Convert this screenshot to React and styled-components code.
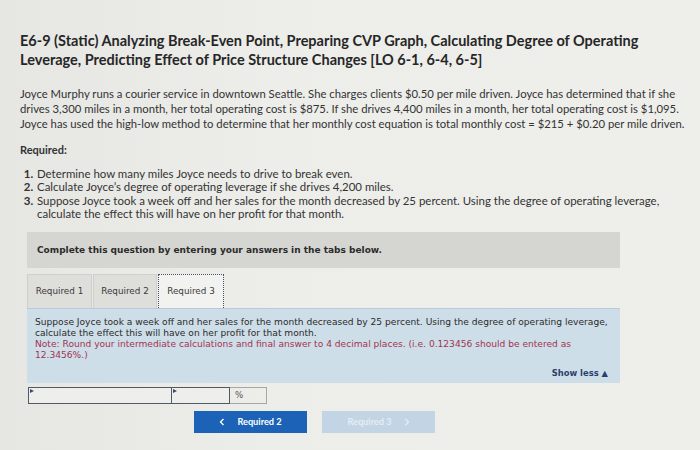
import React from 'react';
import styled, { createGlobalStyle } from 'styled-components';

const GlobalStyle = createGlobalStyle`
  html, body {
    margin: 0;
    padding: 0;
    background: #ebebe8;
  }
  body {
    width: 700px;
    height: 450px;
    overflow: hidden;
    font-family: Lato, "Liberation Sans", sans-serif;
    color: #2a2a2a;
  }
`;

const Page = styled.div`
  padding: 31px 0 0 20px;
  width: 700px;
  height: 450px;
  box-sizing: border-box;
  background: linear-gradient(90deg, #e6e6e3 0%, #ededea 40%, #eeeeeb 100%);
`;

const Title = styled.h1`
  margin: 0;
  font-size: 14.5px;
  line-height: 19px;
  font-weight: 700;
  color: #262626;
  white-space: nowrap;
`;

const Intro = styled.p`
  margin: 17px 0 0;
  font-size: 11.3px;
  line-height: 15px;
  color: #333;
  white-space: nowrap;
`;

const Required = styled.div`
  margin-top: 12px;
  font-size: 11px;
  font-weight: 700;
  color: #333;
`;

const Steps = styled.ol`
  margin: 11px 0 0;
  padding: 0 0 0 16px;
  font-size: 11.45px;
  line-height: 13.4px;
  color: #333;
  white-space: nowrap;

  li::marker {
    font-weight: 700;
  }
  li {
    padding-left: 1px;
  }
`;

const Work = styled.div`
  margin: 11px 0 0 7px;
  width: 593px;
  font-family: "DejaVu Sans", Verdana, sans-serif;
`;

const Banner = styled.div`
  height: 36px;
  background: #d5d5d2;
  display: flex;
  align-items: center;
  padding-left: 10px;
  font-size: 9px;
  font-weight: 700;
  color: #2b2b2b;
`;

const Tabs = styled.div`
  display: flex;
  margin-top: 6px;
  height: 34px;
`;

const Tab = styled.div`
  width: ${p => p.$w}px;
  box-sizing: border-box;
  display: flex;
  align-items: center;
  justify-content: center;
  font-size: 8.8px;
  color: #3a3a3a;
  background: ${p => (p.$active ? '#f2f2f0' : '#dededb')};
  border: ${p => (p.$active ? '1px dotted #44506a' : '1px solid #cfcfcc')};
  border-bottom: none;
  margin-right: 1px;
`;

const Panel = styled.div`
  background: #cedee8;
  border-top: 1px solid #b9cbd8;
  padding: 8px 12px 4px 8px;
  font-size: 9.1px;
  line-height: 11px;
  color: #2a2a2a;
`;

const Note = styled.span`
  color: #a2334f;
`;

const ShowLess = styled.div`
  margin-top: 7px;
  text-align: right;
  font-weight: 700;
  color: #2c3f6b;
  font-size: 8.4px;
`;

const Answer = styled.div`
  display: flex;
  margin: 4px 0 0 1px;
  height: 17px;
`;

const Field = styled.div`
  position: relative;
  width: ${p => p.$w}px;
  box-sizing: border-box;
  border: 1px solid #515866;
  margin-left: ${p => (p.$joined ? '-1px' : '0')};
  background: #eeeeec;

  &::before {
    content: '';
    position: absolute;
    left: 1px;
    top: 1px;
    border-left: 4px solid #3d4a66;
    border-top: 2px solid transparent;
    border-bottom: 2px solid transparent;
  }
`;

const Unit = styled.div`
  width: 37px;
  box-sizing: border-box;
  border: 1px solid #a7a7a5;
  border-left: none;
  font-size: 8.6px;
  color: #555;
  display: flex;
  align-items: center;
  padding-left: 5px;
`;

const Nav = styled.div`
  display: flex;
  gap: 15px;
  margin: 7px 0 0 167px;
`;

const NavButton = styled.div`
  width: 113px;
  height: 22px;
  display: flex;
  align-items: center;
  justify-content: center;
  gap: 12px;
  font-family: Lato, "Liberation Sans", sans-serif;
  font-size: 9.2px;
  font-weight: 700;
  color: ${p => (p.$disabled ? '#e3ecf4' : '#ffffff')};
  background: ${p => (p.$disabled ? '#c3d5e4' : '#1c63b7')};
`;

const Chevron = ({ dir }) => (
  <svg width="6" height="8" viewBox="0 0 6 8">
    <path
      d={dir === 'left' ? 'M4.5 1 L1.5 4 L4.5 7' : 'M1.5 1 L4.5 4 L1.5 7'}
      fill="none"
      stroke="currentColor"
      strokeWidth="1.3"
    />
  </svg>
);

export default function App() {
  return (
    <>
      <GlobalStyle />
      <Page>
        <Title>
          E6-9 (Static) Analyzing Break-Even Point, Preparing CVP Graph, Calculating Degree of Operating
          <br />
          Leverage, Predicting Effect of Price Structure Changes [LO 6-1, 6-4, 6-5]
        </Title>
        <Intro>
          Joyce Murphy runs a courier service in downtown Seattle. She charges clients $0.50 per mile driven. Joyce has determined that if she
          <br />
          drives 3,300 miles in a month, her total operating cost is $875. If she drives 4,400 miles in a month, her total operating cost is $1,095.
          <br />
          Joyce has used the high-low method to determine that her monthly cost equation is total monthly cost = $215 + $0.20 per mile driven.
        </Intro>
        <Required>Required:</Required>
        <Steps>
          <li>Determine how many miles Joyce needs to drive to break even.</li>
          <li>Calculate Joyce’s degree of operating leverage if she drives 4,200 miles.</li>
          <li>
            Suppose Joyce took a week off and her sales for the month decreased by 25 percent. Using the degree of operating leverage,
            <br />
            calculate the effect this will have on her profit for that month.
          </li>
        </Steps>
        <Work>
          <Banner>Complete this question by entering your answers in the tabs below.</Banner>
          <Tabs>
            <Tab $w={65}>Required 1</Tab>
            <Tab $w={64}>Required 2</Tab>
            <Tab $w={66} $active>Required 3</Tab>
          </Tabs>
          <Panel>
            Suppose Joyce took a week off and her sales for the month decreased by 25 percent. Using the degree of operating leverage,
            <br />
            calculate the effect this will have on her profit for that month.
            <br />
            <Note>
              Note: Round your intermediate calculations and final answer to 4 decimal places. (i.e. 0.123456 should be entered as
              <br />
              12.3456%.)
            </Note>
            <ShowLess>Show less ▲</ShowLess>
          </Panel>
          <Answer>
            <Field $w={144} />
            <Field $w={59} $joined />
            <Unit>%</Unit>
          </Answer>
          <Nav>
            <NavButton>
              <Chevron dir="left" />
              Required 2
            </NavButton>
            <NavButton $disabled>
              Required 3
              <Chevron dir="right" />
            </NavButton>
          </Nav>
        </Work>
      </Page>
    </>
  );
}
